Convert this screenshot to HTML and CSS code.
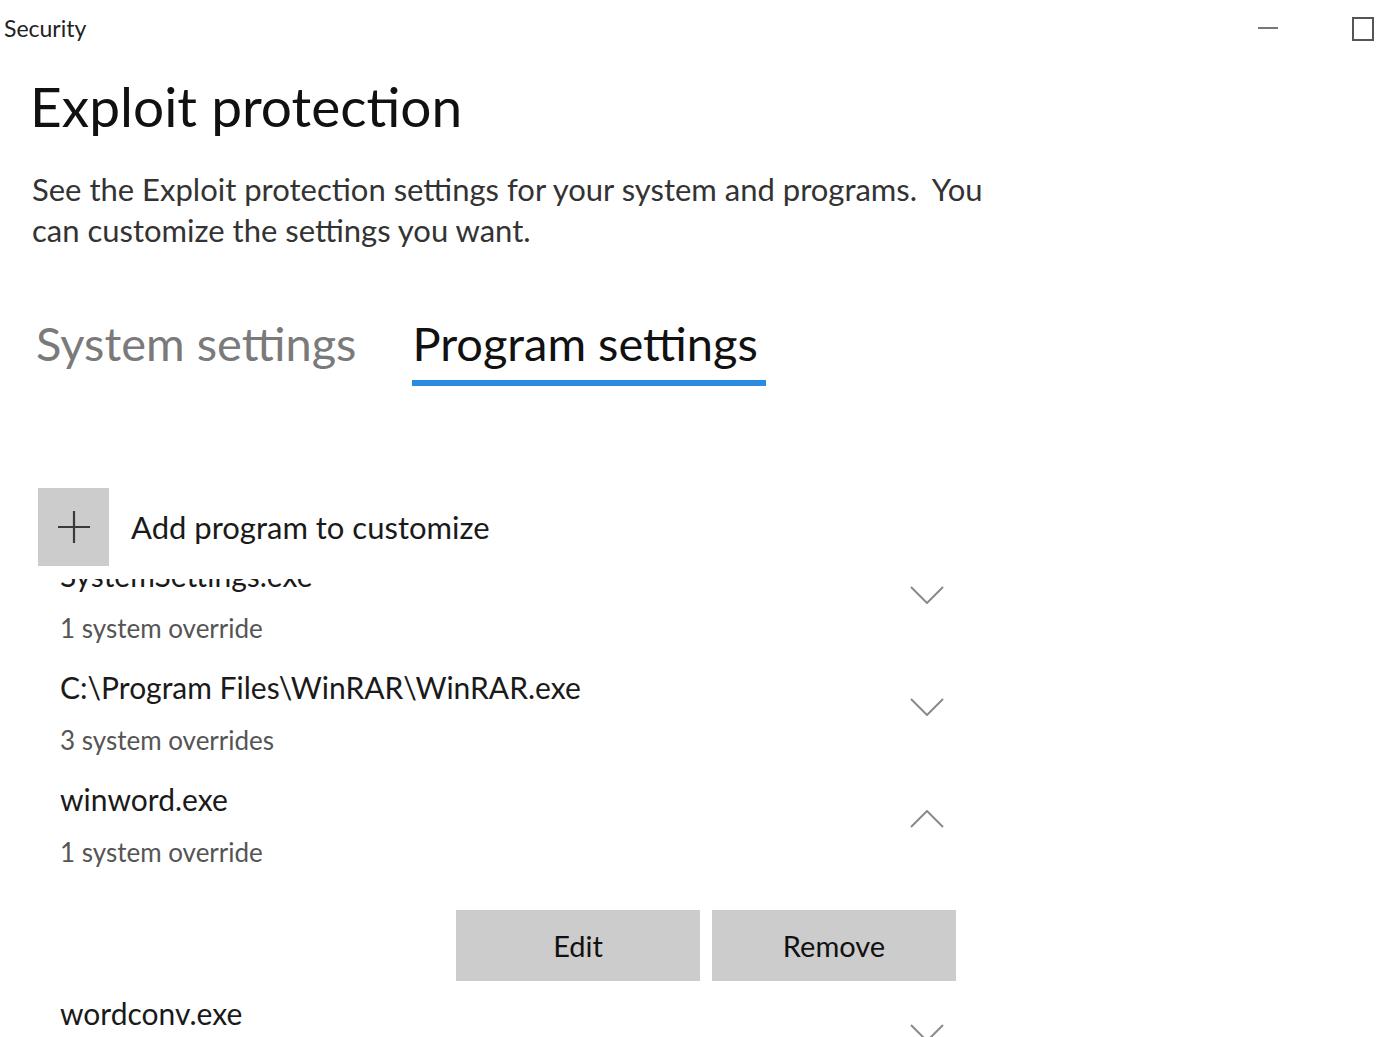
FILE: index.html
```html
<!DOCTYPE html>

<html>
  <head>
    <title>Security</title>

    <link rel="stylesheet" href="styles.css">
  </head>
  <body>
    <div class="titlebar">
      <span class="app-name">Security</span>
      <div class="window-buttons">
        <span class="minimize"></span>
        <span class="maximize"></span>
      </div>
    </div>

    <main>
      <h1>Exploit protection</h1>

      <p class="intro">
        See the Exploit protection settings for your system and programs.&nbsp; You<br>
        can customize the settings you want.
      </p>

      <nav class="tabs">
        <a href="#" class="tab">System settings</a>
        <a href="#" class="tab active">Program settings</a>
      </nav>

      <a href="#" class="add-program">
        <span class="add-icon">
          <svg width="34" height="34" viewBox="0 0 34 34">
            <path d="M17 1v32M1 17h32" stroke="#3a3a3a" stroke-width="2.2" fill="none"/>
          </svg>
        </span>
        Add program to customize
      </a>

      <div class="programs">
        <div class="program-list">
          <div class="program">
            <div class="program-head">
              <div>
                <div class="program-name">SystemSettings.exe</div>
                <div class="program-overrides">1 system override</div>
              </div>
              <svg class="chevron" width="34" height="18" viewBox="0 0 34 18">
                <path d="M1 1l16 16 16-16" />
              </svg>
            </div>
          </div>

          <div class="program">
            <div class="program-head">
              <div>
                <div class="program-name">C:\Program Files\WinRAR\WinRAR.exe</div>
                <div class="program-overrides">3 system overrides</div>
              </div>
              <svg class="chevron" width="34" height="18" viewBox="0 0 34 18">
                <path d="M1 1l16 16 16-16" />
              </svg>
            </div>
          </div>

          <div class="program open">
            <div class="program-head">
              <div>
                <div class="program-name">winword.exe</div>
                <div class="program-overrides">1 system override</div>
              </div>
              <svg class="chevron" width="34" height="18" viewBox="0 0 34 18">
                <path d="M1 17l16-16 16 16" />
              </svg>
            </div>
            <div class="program-actions">
              <button>Edit</button>
              <button>Remove</button>
            </div>
          </div>

          <div class="program">
            <div class="program-head">
              <div>
                <div class="program-name">wordconv.exe</div>
                <div class="program-overrides">1 system override</div>
              </div>
              <svg class="chevron" width="34" height="18" viewBox="0 0 34 18">
                <path d="M1 1l16 16 16-16" />
              </svg>
            </div>
          </div>
        </div>
      </div>
    </main>
  </body>
</html>
```

FILE: styles.css
```css
* { box-sizing: border-box; }
html, body {
  height: 100%;
}
body {
  margin: 0;
  background: white;
  color: #111;
  font-family: Lato, "Open Sans", sans-serif;
  overflow: hidden;
  display: flex;
  flex-direction: column;
}
.titlebar {
  display: flex;
  align-items: center;
  justify-content: space-between;
  flex: none;
  height: 58px;
  padding: 0 8px 0 4px;
}
.app-name {
  font-size: 23px;
  color: #222;
  margin-top: -2px;
}
.window-buttons {
  display: flex;
  align-items: center;
  gap: 74px;
}
.minimize {
  width: 20px;
  height: 2px;
  background: #777;
  margin-top: -2px;
}
.maximize {
  width: 22px;
  height: 24px;
  border: 2px solid #555;
}
main {
  flex: 1;
  display: flex;
  flex-direction: column;
  min-height: 0;
  padding-left: 30px;
}
h1 {
  margin: 0;
  font-size: 55px;
  font-weight: normal;
  line-height: 96px;
}
.intro {
  margin: 15px 0 0 2px;
  font-size: 31px;
  line-height: 41px;
  color: #333;
}
.tabs {
  display: flex;
  gap: 48px;
  margin: 62px 0 0 6px;
}
.tab {
  font-size: 47px;
  line-height: 60px;
  color: #7a7a7a;
  text-decoration: none;
  padding: 0 8px 7px 0;
  border-bottom: 6px solid transparent;
}
.tab.active {
  color: #111;
  border-bottom-color: #2b8be0;
}
.add-program {
  display: flex;
  align-items: center;
  gap: 22px;
  margin: 102px 0 0 8px;
  font-size: 31px;
  color: #1a1a1a;
  text-decoration: none;
}
.add-icon {
  display: flex;
  align-items: center;
  justify-content: center;
  width: 71px;
  height: 78px;
  background: #cccccc;
}
.programs {
  flex: 1;
  overflow: hidden;
  margin-top: 13px;
  padding-left: 30px;
}
.program-list {
  width: 896px;
  margin-top: -20px;
}
.program {
  padding-bottom: 28px;
}
.program-head {
  display: flex;
  justify-content: space-between;
  align-items: flex-start;
}
.program-name {
  font-size: 30px;
  line-height: 32px;
  color: #1a1a1a;
}
.program-overrides {
  margin-top: 22px;
  font-size: 26px;
  line-height: 30px;
  color: #555;
}
.chevron {
  margin: 27px 12px 0 0;
  fill: none;
  stroke: #8a8a8a;
  stroke-width: 2;
}
.program.open {
  padding-bottom: 16px;
}
.program-actions {
  display: flex;
  justify-content: flex-end;
  gap: 12px;
  margin-top: 43px;
}
button {
  width: 244px;
  height: 71px;
  border: 0;
  background: #cccccc;
  font-family: inherit;
  font-size: 29px;
  color: #111;
}
```
